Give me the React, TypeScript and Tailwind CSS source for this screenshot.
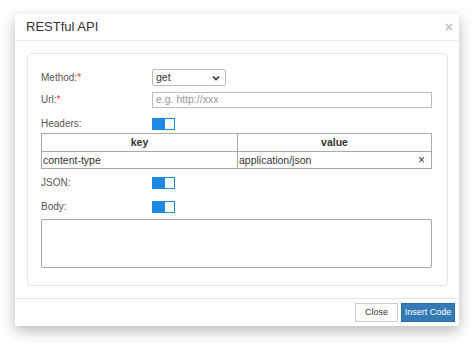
const FONT = { fontFamily: '"Liberation Sans", Arial, sans-serif' };

function Toggle() {
  return (
    <div className="flex h-[12px] w-[23px] items-center justify-end bg-[#1e88e5] p-[1px]">
      <div className="h-[10px] w-[9px] bg-white" />
    </div>
  );
}

function Row({ label, required, children, className = "" }: { label: string; required?: boolean; children: React.ReactNode; className?: string }) {
  return (
    <div className={`flex items-center ${className}`}>
      <div className="w-[111px] shrink-0 text-[10px] leading-none text-[#555]">
        {label}
        {required && <span className="text-[#e53935]">*</span>}
      </div>
      {children}
    </div>
  );
}

export default function App() {
  return (
    <div className="h-[348px] w-[474px] bg-white pl-[15px] pt-[14px]" style={FONT}>
      <div className="flex h-[312px] w-[444px] flex-col rounded-[2px] bg-white shadow-[0_5px_14px_rgba(0,0,0,0.28)]">
        {/* Header */}
        <div className="flex h-[27px] shrink-0 items-center justify-between border-b border-[#ececec] pl-[11px] pr-[6px]">
          <span className="text-[13px] text-[#333]">RESTful API</span>
          <span className="text-[14px] font-bold leading-none text-[#c4c4c4]">×</span>
        </div>

        {/* Body */}
        <div className="flex-1 px-[12px] pt-[12px]">
          <div className="h-[233px] w-[421px] rounded-[4px] border border-[#e6e6e6] pl-[13px] pr-[15px] pt-[15px]">
            <Row label="Method:" required className="h-[17px]">
              <div className="flex h-[17px] w-[74px] items-center justify-between rounded-[2px] border border-[#bbb] pl-[3px] pr-[5px] text-[10.5px] text-[#333]">
                <span>get</span>
                <svg width="8" height="6" viewBox="0 0 8 6">
                  <path d="M1 1.5 L4 4.5 L7 1.5" fill="none" stroke="#333" strokeWidth="1.6" />
                </svg>
              </div>
            </Row>
            <Row label="Url:" required className="mt-[6px] h-[16px]">
              <div className="flex h-[16px] flex-1 items-center border border-[#bbb] pl-[3px] text-[10.5px] text-[#999]">
                e.g. http://xxx
              </div>
            </Row>
            <Row label="Headers:" className="mt-[10px] h-[12px]">
              <Toggle />
            </Row>
            <table className="mt-[3px] w-full border-collapse text-[10.5px] leading-none text-[#333]">
              <thead>
                <tr className="h-[18px]">
                  <th className="w-[196px] border border-[#aaa] p-0 text-center font-bold">key</th>
                  <th className="border border-[#aaa] p-0 text-center font-bold">value</th>
                </tr>
              </thead>
              <tbody>
                <tr className="h-[17px]">
                  <td className="border border-[#aaa] p-0 pl-[1px]">content-type</td>
                  <td className="border border-[#aaa] p-0 pl-[1px]">
                    <div className="flex items-center justify-between pr-[6px]">
                      <span>application/json</span>
                      <span className="text-[12px] leading-none">×</span>
                    </div>
                  </td>
                </tr>
              </tbody>
            </table>
            <Row label="JSON:" className="mt-[8px] h-[12px]">
              <Toggle />
            </Row>
            <Row label="Body:" className="mt-[12px] h-[12px]">
              <Toggle />
            </Row>
            <div className="mt-[6px] h-[49px] w-full rounded-[2px] border border-[#a8a8a8]" />
          </div>
        </div>

        {/* Footer */}
        <div className="mt-[12px] flex h-[28px] shrink-0 items-center justify-end gap-[3px] border-t border-[#e5e5e5] pr-[4px]">
          <button className="h-[19px] w-[43px] whitespace-nowrap border border-[#ccc] bg-white p-0 text-[9px] text-[#333]">Close</button>
          <button className="h-[19px] w-[54px] whitespace-nowrap border border-[#2e6da4] bg-[#337ab7] p-0 text-[9px] text-white">Insert Code</button>
        </div>
      </div>
    </div>
  );
}
